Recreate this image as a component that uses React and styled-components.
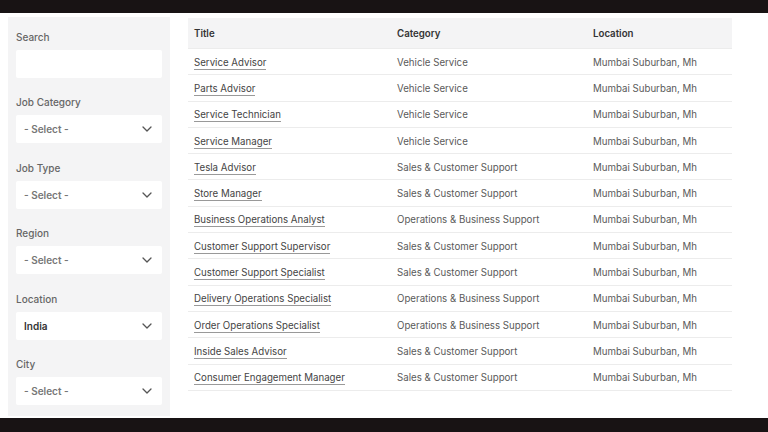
import React from "react";
import styled, { createGlobalStyle } from "styled-components";

const GlobalStyle = createGlobalStyle`
  body {
    margin: 0;
    background: #fff;
    font-family: Inter, "Liberation Sans", sans-serif;
  }
`;

const jobs = [
  { title: "Service Advisor", category: "Vehicle Service" },
  { title: "Parts Advisor", category: "Vehicle Service" },
  { title: "Service Technician", category: "Vehicle Service" },
  { title: "Service Manager", category: "Vehicle Service" },
  { title: "Tesla Advisor", category: "Sales & Customer Support" },
  { title: "Store Manager", category: "Sales & Customer Support" },
  { title: "Business Operations Analyst", category: "Operations & Business Support" },
  { title: "Customer Support Supervisor", category: "Sales & Customer Support" },
  { title: "Customer Support Specialist", category: "Sales & Customer Support" },
  { title: "Delivery Operations Specialist", category: "Operations & Business Support" },
  { title: "Order Operations Specialist", category: "Operations & Business Support" },
  { title: "Inside Sales Advisor", category: "Sales & Customer Support" },
  { title: "Consumer Engagement Manager", category: "Sales & Customer Support" },
];

const filters = [
  { label: "Job Category", value: "- Select -" },
  { label: "Job Type", value: "- Select -" },
  { label: "Region", value: "- Select -" },
  { label: "Location", value: "India", chosen: true },
  { label: "City", value: "- Select -" },
];

const Chevron = () => (
  <svg width="10" height="6" viewBox="0 0 10 6" fill="none">
    <path d="M1 1l4 4 4-4" stroke="#555" strokeWidth="1.3" strokeLinecap="round" strokeLinejoin="round" />
  </svg>
);

const App = () => {
  return (
    <Page>
      <GlobalStyle />
      <Bar />
      <Content>
        <Sidebar>
          <Field>
            <Label>Search</Label>
            <SearchInput />
          </Field>
          {filters.map((f) => (
            <Field key={f.label}>
              <Label>{f.label}</Label>
              <Select>
                <SelectText $chosen={f.chosen}>{f.value}</SelectText>
                <Chevron />
              </Select>
            </Field>
          ))}
        </Sidebar>
        <Main>
          <Table>
            <colgroup>
              <col style={{ width: "203px" }} />
              <col style={{ width: "196px" }} />
              <col />
            </colgroup>
            <thead>
              <tr>
                <Th>Title</Th>
                <Th>Category</Th>
                <Th>Location</Th>
              </tr>
            </thead>
            <tbody>
              {jobs.map((job) => (
                <tr key={job.title}>
                  <Td>
                    <JobLink href="#">{job.title}</JobLink>
                  </Td>
                  <Td>{job.category}</Td>
                  <Td>Mumbai Suburban, Mh</Td>
                </tr>
              ))}
            </tbody>
          </Table>
        </Main>
      </Content>
      <Bar $bottom />
    </Page>
  );
};

export default App;

const Page = styled.div`
  height: 432px;
  display: flex;
  flex-direction: column;
  overflow: hidden;
`;

const Bar = styled.div`
  height: ${(p) => (p.$bottom ? "14px" : "13px")};
  flex-shrink: 0;
  background: #181314;
`;

const Content = styled.div`
  flex: 1;
  display: flex;
  gap: 18px;
  padding: 4px 36px 2px 8px;
  min-height: 0;
`;

const Sidebar = styled.aside`
  width: 162px;
  box-sizing: border-box;
  background: #f4f4f5;
  padding: 14px 8px 0;
  display: flex;
  flex-direction: column;
  gap: 18.4px;
`;

const Field = styled.div`
  display: flex;
  flex-direction: column;
`;

const Label = styled.div`
  font-size: 10px;
  line-height: 12px;
  font-weight: 500;
  color: #666;
  margin-bottom: 7px;
`;

const SearchInput = styled.div`
  height: 28px;
  background: #fff;
  border-radius: 2px;
`;

const Select = styled.div`
  height: 28px;
  background: #fff;
  border-radius: 2px;
  display: flex;
  align-items: center;
  justify-content: space-between;
  padding: 0 10px 0 8px;
`;

const SelectText = styled.span`
  font-size: 10px;
  font-weight: 600;
  color: ${(p) => (p.$chosen ? "#333" : "#777")};
`;

const Main = styled.main`
  flex: 1;
  padding-top: 1px;
`;

const Table = styled.table`
  width: 100%;
  table-layout: fixed;
  border-collapse: collapse;
  font-size: 9.7px;
`;

const Th = styled.th`
  height: 30px;
  padding: 0 6px;
  text-align: left;
  font-weight: 600;
  color: #333;
  background: #f4f4f5;
  border-bottom: 1px solid #ececec;
`;

const Td = styled.td`
  height: 24.3px;
  padding: 1px 6px 0;
  color: #5a5a5a;
  border-bottom: 1px solid #ececec;
  white-space: nowrap;
`;

const JobLink = styled.a`
  color: #444;
  text-decoration: none;
  border-bottom: 1px solid #999;
  padding-bottom: 1px;
`;
